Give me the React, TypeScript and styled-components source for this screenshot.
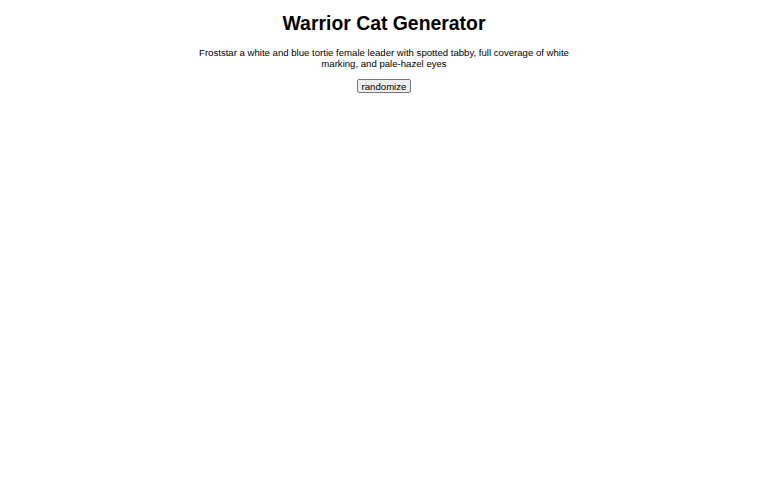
import React, {useState} from 'react';
import styled, {createGlobalStyle} from 'styled-components';

const GlobalStyle = createGlobalStyle`
  body {
    margin: 8px;
    background: #fff;
    font-family: "Liberation Sans", Arial, sans-serif;
    color: #000;
  }
`;

const Page = styled.div`
  display: flex;
  flex-direction: column;
  align-items: center;
  text-align: center;
`;

const Title = styled.h1`
  font-size: 19.4px;
  font-weight: bold;
  margin: 4px 0 12px;
`;

const Description = styled.p`
  font-size: 9.6px;
  line-height: 11px;
  max-width: 376px;
  margin: 0 0 10px;
`;

const Button = styled.button`
  font-family: "Liberation Sans", Arial, sans-serif;
  font-size: 9.6px;
  line-height: 11px;
  padding: 1px 4px 0;
  background: #efefef;
  border: 1px solid #767676;
  border-radius: 2px;
  color: #000;
`;

const names = ['Froststar', 'Ashfur', 'Leafpool', 'Brambleclaw', 'Sandstorm'];
const colors = ['white and blue tortie', 'ginger', 'silver tabby', 'black', 'brown'];
const genders = ['female', 'male'];
const ranks = ['leader', 'deputy', 'warrior', 'medicine cat', 'apprentice'];
const patterns = ['spotted tabby', 'mackerel tabby', 'classic tabby', 'ticked tabby'];
const whites = ['full coverage of white marking', 'low white marking', 'no white marking'];
const eyes = ['pale-hazel', 'amber', 'green', 'blue', 'yellow'];

const pick = (list: string[]) => list[Math.floor(Math.random() * list.length)];

function describe() {
    return `${pick(names)} a ${pick(colors)} ${pick(genders)} ${pick(ranks)} with ${pick(patterns)}, ${pick(whites)}, and ${pick(eyes)} eyes`;
}

export default function App() {
    const [cat, setCat] = useState(
        'Froststar a white and blue tortie female leader with spotted tabby, full coverage of white marking, and pale-hazel eyes'
    );

    return (
        <Page>
            <GlobalStyle/>
            <Title>Warrior Cat Generator</Title>
            <Description>{cat}</Description>
            <Button onClick={() => setCat(describe())}>randomize</Button>
        </Page>
    );
}
